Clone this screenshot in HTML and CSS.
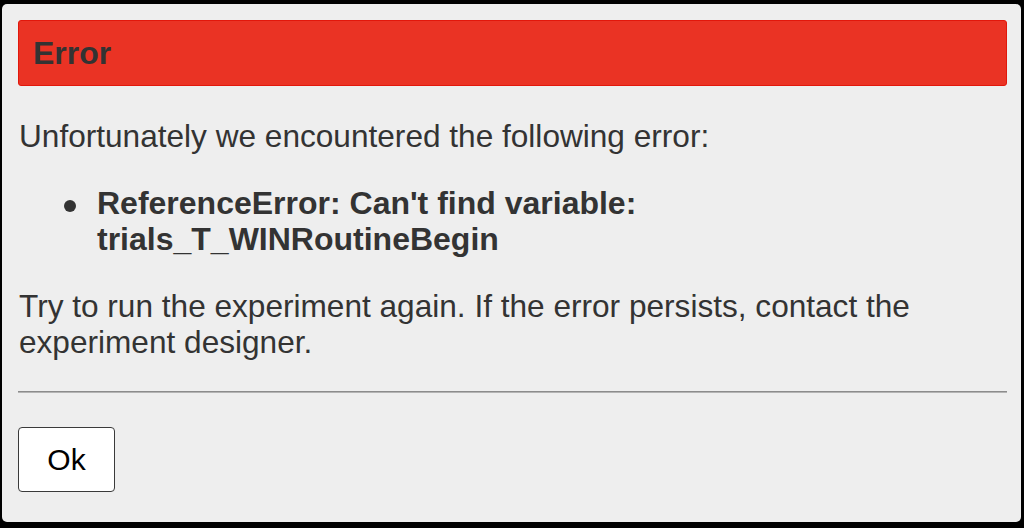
FILE: index.html
```html
<!DOCTYPE html>
<html lang="en">
<head>
<meta charset="utf-8">
<title>Error</title>
<link rel="stylesheet" href="styles.css">
</head>
<body>
<div class="dialog">
  <div class="dialog-title">Error</div>
  <div class="dialog-body">
    <p class="msg">Unfortunately we encountered the following error:</p>
    <ul class="errors">
      <li>ReferenceError: Can't find variable: trials_T_WINRoutineBegin</li>
    </ul>
    <p class="msg">Try to run the experiment again. If the error persists, contact the experiment designer.</p>
  </div>
  <hr class="divider">
  <div class="actions">
    <button class="ok-btn" type="button">Ok</button>
  </div>
</div>
</body>
</html>
```
FILE: styles.css
```css
html, body {
  margin: 0;
  height: 100%;
  background: #000;
}
body {
  padding: 4px 3px 6px 2px;
  box-sizing: border-box;
  font-family: "Liberation Sans", Arial, Helvetica, sans-serif;
}
.dialog {
  box-sizing: border-box;
  height: 100%;
  background: #eeeeee;
  border-radius: 5px;
  padding: 16px 14px 0 16px;
  color: #333;
  font-size: 32px;
  line-height: 36px;
}
.dialog-title {
  background: #ea3324;
  border: 1px solid #e2170b;
  border-radius: 3px;
  padding: 14px 14px;
  font-weight: bold;
  color: #333;
}
.dialog-body {
  padding-top: 32px;
  display: flex;
  flex-direction: column;
  gap: 31px;
}
.msg {
  margin: 0;
  padding-left: 1px;
  font-size: 31.6px;
}
.errors {
  list-style: none;
  margin: 0;
  padding: 0;
  font-weight: bold;
}
.errors li {
  display: flex;
  padding-left: 46px;
}
.errors li::before {
  content: "";
  flex: none;
  width: 12px;
  height: 12px;
  border-radius: 50%;
  background: #333;
  margin: 15px 21px 0 0;
}
.divider {
  margin: 31px 0 0 0;
  border: 0;
  border-top: 1px solid #8c8c8c;
  border-bottom: 1px solid #b4b4b4;
  height: 0;
}
.actions {
  padding-top: 34px;
}
.ok-btn {
  width: 97px;
  height: 65px;
  background: #fff;
  border: 1px solid #3a3a3a;
  border-radius: 4px;
  font-family: "Liberation Sans", Arial, Helvetica, sans-serif;
  font-size: 30px;
  color: #000;
  padding: 0;
}
```
